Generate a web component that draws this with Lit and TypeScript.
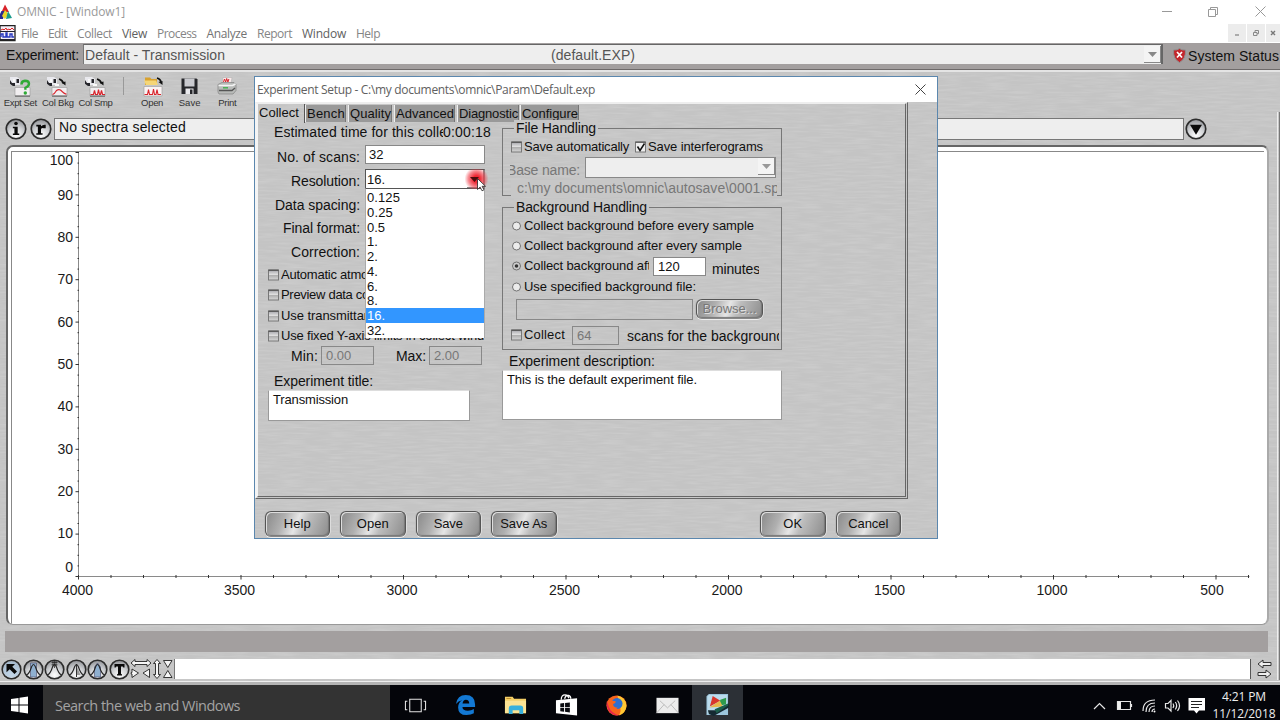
import { LitElement, html, css, svg } from "lit";
import { customElement, property } from "lit/decorators.js";

/** A label whose tracking is adjusted so that it occupies a given width. */
@customElement("fit-label")
class FitLabel extends LitElement {
  @property({ type: Number }) w = 0;
  @property() text = "";
  static styles = css`
    :host { display: inline-block; white-space: pre; flex: none; }
    .t { display: inline-block; }
  `;
  firstUpdated() {
    const t = this.renderRoot.querySelector(".t") as HTMLElement;
    const natural = t.getBoundingClientRect().width;
    const n = this.text.length;
    if (natural && n > 1) {
      t.style.letterSpacing = `${(this.w - natural) / n}px`;
      this.style.width = `${this.w}px`;
    }
  }
  render() {
    return html`<span class="t">${this.text}</span>`;
  }
}

const fit = (text: string, w: number, cls = "") =>
  html`<fit-label class=${cls} .text=${text} .w=${w}></fit-label>`;

const menus: [string, number, string][] = [
  ["File", 17, ""], ["Edit", 19, ""], ["Collect", 35, ""], ["View", 25, "strong"],
  ["Process", 39.5, ""], ["Analyze", 40.5, "mid"], ["Report", 35, ""],
  ["Window", 44, "strong"], ["Help", 24, ""],
];

const stack = svg`
  <path d="M1 1h7l3 2v6H1z" fill="#e9e9ee"/>
  <path d="M1 4l2 3h3v3H4L1 8zM7.500 3H10v4H7.500z" fill="#26262b"/>
  <path d="M4 3h2v3H4zM9 8h4v2H9z" fill="#fafafa"/>
  <path d="M13 3q3.500 1 4.500 4.500" stroke="#111" stroke-width="1.800" fill="none"/><path d="M15.500 6.500l4-1v4z" fill="#111"/>`;
const sheet = (line: unknown) => svg`
  <path d="M6 11.500h15v8.500H6z" fill="#f1eef0" stroke="#999" stroke-width=".6"/>
  <path d="M6 19.500h15v1.200H6z" fill="#666"/>${line}`;

const tools = [
  { w: 33, name: "Expt Set", icon: svg`<path d="M1 1h7l3 2v6H1z" fill="#e9e9ee"/><path d="M1 4l2 3h3v3H4L1 8zM7.500 3H10v4H7.500z" fill="#26262b"/><path d="M4 3h2v3H4z" fill="#fafafa"/>${sheet(svg`<path d="M12.500 8.500q0-3.500 3.500-3.700 4 .1 4 3 0 2.500-3.600 4v2" stroke="#2faa36" stroke-width="2.400" fill="none"/><circle cx="16.300" cy="17" r="1.700" fill="#2faa36"/>`)}` },
  { w: 32, name: "Col Bkg", icon: svg`${stack}${sheet(svg`<path d="M6.500 18.500q2-.5 4-4 2-1.500 4-.5 4 4 6 4.200" stroke="#d8242c" stroke-width="1.200" fill="none"/>`)}` },
  { w: 34, name: "Col Smp", icon: svg`${stack}${sheet(svg`<path d="M6.500 18.500h3l1-4 1 4h2l1-5 1 5h1l1-4 1 4h2.500" stroke="#d8242c" stroke-width="1.200" fill="none"/>`)}` },
  { w: 22, name: "Open", icon: svg`
      <path d="M4 1.500h5l1.500 1.500H16v6H4z" fill="#d9a22e"/><path d="M3 4.500h12l2 4.500H5z" fill="#f5d677"/>
      <path d="M16 2q3.500 1 4 4" stroke="#111" stroke-width="1.700" fill="none"/><path d="M17.500 6l4-1v4z" fill="#111"/>
      <path d="M3 10.500h18v9.500H3z" fill="#faf3f3" stroke="#999" stroke-width=".6"/>
      <path d="M3.500 18.500h3l1-5 1 5h3l1-5.500 1 5.500h1.500l1-5 1 5h3" stroke="#d8242c" stroke-width="1.100" fill="none"/>` },
  { w: 22, name: "Save", icon: svg`
      <path d="M3.500 2.500h15l1 1v14.500h-16z" fill="#26272b"/><path d="M6.500 2.500h10v8h-10z" fill="#c9cacf"/><path d="M7.500 12.500h8v5.500h-8z" fill="#e9e9ec"/>
      <path d="M12 13.500h2.500v4.500H12z" fill="#26272b"/>` },
  { w: 18, name: "Print", icon: svg`
      <path d="M7 1.500h9l-1 6H6z" fill="#f7eaea" stroke="#aaa" stroke-width=".5"/>
      <path d="M7.500 6l1-3 1.200 3 1-3.500 1.200 3.500 1-3" stroke="#d8242c" stroke-width="1" fill="none"/>
      <path d="M2 8.500l4-2h12l2 2v6l-3 3.500H3l-1-2z" fill="#b9bbb9" stroke="#777" stroke-width=".6"/>
      <path d="M2.500 9.500h14l3-1.500" stroke="#f4f4f4" stroke-width="1.500" fill="none"/>
      <path d="M3 14.500h13l3-2.500" stroke="#555" stroke-width="1.300" fill="none"/><path d="M7 11.800h5" stroke="#3eb14b" stroke-width="1.400"/>` },
];

const ball = svg`
  <circle cx="10.500" cy="10.500" r="9.300" fill="url(#ball)" stroke="#2c2c2c" stroke-width="1.600"/>`;
const ballDefs = svg`<defs><radialGradient id="ball" cx=".5" cy=".8" r=".85"><stop offset="0" stop-color="#fff"/><stop offset=".5" stop-color="#cdcfd2"/><stop offset="1" stop-color="#85878b"/></radialGradient></defs>`;
const peak = (fill: unknown) => svg`${fill}<path d="M3.500 16q3-1.500 5-8 2-5 4 0 2 6.500 5 8" fill="none" stroke="#222" stroke-width="1.100"/>`;
const viewTools = [
  svg`<circle cx="10.500" cy="10.500" r="8.300" fill="#a9c4de" opacity=".7"/><path d="M5.500 5h8.500l-2.700 2.700 4.700 4.800-2.500 2.500-4.800-4.700-3.200 3z" fill="#0a0a0a"/>`,
  peak(svg`<path d="M7.500 4h6v14h-6z" fill="#8fb0d0" stroke="#446" stroke-width=".6"/>`),
  svg`${peak(svg``)}<path d="M10.500 1v8M7.500 3.500h6M7.500 5.800h6M9 1.500v6M12 1.500v6" stroke="#222" stroke-width=".7"/>`,
  peak(svg`<path d="M10.500 7l4 9h-4z" fill="#999"/><path d="M10.500 5v13" stroke="#333" stroke-width="1"/>`),
  peak(svg`<path d="M7.500 8l3-4 3 4v10h-6z" fill="#8fb0d0" stroke="#446" stroke-width=".6"/>`),
  svg`<path d="M5.500 5h10v3.400h-1.200l-.5-1H12v7.400l1 .7v1H8v-1l1-.7V7.400H7.200l-.5 1H5.500z" fill="#0a0a0a"/>`,
];

const taskIcons = [
  svg`<path d="M6 6.500h12v13H6zM3.500 8.500h-2v9h2M20.500 8.500h2v9h-2" fill="none" stroke="#e4e4e4" stroke-width="1.100"/>`,
  svg`<path d="M2 11.500Q3.500 2 12.200 2 22 2 22 12v2.500H8.800q.2 4 5.700 4 3.500 0 6.200-1.700v4.400Q18 23 13 23 4.300 23 4.300 15q0-5 4.200-7.500Q4.500 8 2 11.500zM8.900 11h7q0-4-3.500-4-3 0-3.500 4z" fill="#1379d4" fill-rule="evenodd"/>`,
  svg`<path d="M1 4h8l1.500 2H23v15H1z" fill="#f4cf67"/><path d="M2.500 5.200h5v1h-5z" fill="#b98a2d"/><path d="M1 8h22v13H1z" fill="#fbe394"/><path d="M5 22v-6q0-3 3-3h9q3 0 3 3v6h-4v-4H9v4z" fill="#38b0dc"/>`,
  svg`<path d="M1 7.500l22-2v18l-22-2.500z" fill="#fff"/><path d="M6.500 7q0-5 4-5 3 0 4 3.500M10 6q1-4 4-3.500 2.500.5 2.500 3.500" fill="none" stroke="#fff" stroke-width="1.300"/><path d="M5.500 11l4-.5v4h-4zM10.500 10.400l5-.6v4.700h-5zM5.500 15.500h4v4l-4-.5zM10.500 15.500h5v4.700l-5-.6z" fill="#0a0b10"/>`,
  svg`<circle cx="12" cy="13" r="10.500" fill="#f8641c"/><path d="M13 2.500q9 2 9.500 11-1 8-8 10 3-5 1-10z" fill="#ffc733"/><path d="M2 8q-1 5 1.500 10 4 6 11 5.500-8-3-10.500-9z" fill="#e8274b"/><circle cx="12.500" cy="11" r="5.800" fill="#2d6fd0"/><path d="M6 5q0 2 1.500 3 3 0 4 1-1 2-3 2.500 0 4 5 4-3 3-7 .5-3.500-4-.5-11z" fill="#f8641c"/>`,
  svg`<path d="M.5 5h23v16H.5z" fill="#ececec"/><path d="M4 8l8 7.500L20 8M.5 21l8-9M23.500 21l-8-9" fill="none" stroke="#b5b5b5" stroke-width=".9"/>`,
  svg`<path d="M3 1h20v22H.5V3.500z" fill="#9cc5dc"/><path d="M3 2h19v10L8 22H1.500V4z" fill="#bcdced"/><path d="M7 3l8 5-11 6z" fill="#d9372c"/><path d="M15 7l6-2v7l-8 1z" fill="#2d9b4c"/><path d="M3.500 15l11-7 3 6z" fill="#e8b94b"/><path d="M2 18h9l13-7v4L8 24l-5-2z" fill="#152a33"/><path d="M9 17l14-6v2l-12 8z" fill="#1c5f4b"/>`,
];

const yLabels = [[100, 160], [90, 194.500], [80, 237], [70, 279], [60, 321.500], [50, 364], [40, 406], [30, 448.500], [20, 490.500], [10, 533], [0, 567]];
const xLabels = [[4000, 77.500], [3500, 239.500], [3000, 402], [2500, 564.500], [2000, 727], [1500, 889.500], [1000, 1052], [500, 1212]];
const range = (n: number) => Array.from({ length: n }, (_, i) => i);

@customElement("app-root")
class AppRoot extends LitElement {
  static styles = css`
    :host {
      display: block; width: 1280px; height: 720px; overflow: hidden; position: relative;
      font-family: "Liberation Sans", Arial, sans-serif; font-size: 14px; line-height: 16px; color: #111;
      --metal: #c4c4c4 url("data:image/svg+xml,%3Csvg xmlns='http://www.w3.org/2000/svg' width='320' height='160'%3E%3Cfilter id='f' x='0' y='0' width='100%25' height='100%25'%3E%3CfeTurbulence type='fractalNoise' baseFrequency='.04 .5' numOctaves='2' seed='4' stitchTiles='stitch'/%3E%3CfeColorMatrix values='0 0 0 0 1 0 0 0 0 1 0 0 0 0 1 .9 0 0 0 -.35'/%3E%3C/filter%3E%3Crect width='320' height='160' filter='url(%23f)' opacity='.32'/%3E%3C/svg%3E");
    }
    * { box-sizing: border-box; }
    svg { display: block; flex: none; overflow: visible; }
    .ui { font-family: "Open Sans", "Noto Sans", sans-serif; }
    .window { display: flex; flex-direction: column; height: 685px; background: var(--metal); }

    .titlebar { height: 24px; background: #fff; display: flex; align-items: center; color: #9a9a9a; font-size: 12px; }
    .titlebar .logo { margin: 0 5px 0 0; }
    .titlebar .ctl { margin-left: auto; }
    .menubar { height: 19px; background: #fff; display: flex; align-items: center; font-size: 12px; color: #858585; }
    .menubar .doc { margin-right: 5px; }
    .menubar fit-label { margin-right: 10px; }
    .strong { color: #606060; } .mid { color: #737373; }
    .mdi { margin-left: auto; display: flex; gap: 1px; height: 19px; }
    .mdi div { width: 18px; height: 18px; background: #ececec; display: grid; place-items: center; overflow: hidden; }
    .mdi div:last-child { width: 14px; }

    .expbar { height: 27px; background: #a39f9f; border-bottom: 1px solid #6e6a6a; display: flex; padding: 1px 0 0 6px; }
    .expbar .lab { line-height: 23px; width: 77px; }
    .combo { width: 1080px; height: 20px; background: #eee; border-top: 1px solid #666; border-left: 1px solid #777; border-right: 2px solid #666; display: flex; align-items: center; color: #555; line-height: 20px; padding-left: 1px; }
    .combo .exp { margin-left: auto; }
    .combo .drop { margin-left: 509px; }
    .drop { width: 17px; height: 17px; background: #f4f4f4; border-right: 1px solid #888; border-bottom: 1px solid #888; display: grid; place-items: center; }
    .status { display: flex; margin-left: 9.500px; align-items: center; height: 23px; }
    .status fit-label { margin-left: 2.500px; }

    .toolbar { height: 44px; display: flex; border-top: 2px solid #e4e4e4; padding: 4px 0 0 1.500px; font-size: 9.500px; line-height: 13px; color: #333; }
    .tool { width: 37.600px; display: flex; flex-direction: column; align-items: center; height: 36px; }
    .tool svg { margin-bottom: -1px; }
    .sep { width: 1px; height: 18px; background: #777; margin: 1px 9.500px 0 8.500px; border-right: 1px solid #999; }
    .inforow { height: 31px; display: flex; align-items: center; padding: 0 0 1px 5px; }
    .inforow svg + svg { margin-left: 3px; }
    .infobox { margin-left: 2px; width: 1130px; height: 22px; background: #eee; border: 1px solid #777; padding: 0 4px; line-height: 17px; }
    .inforow .infobox + svg { margin-left: 1px; }

    .plot { margin-left: 6px; width: 1263px; height: 480px; background: #fff; border: 2px solid #666; border-right-color: #aaa; border-bottom: 1px solid #999; border-radius: 7px; overflow: hidden; padding: 4px 2px 0 3px; }
    .inner { border-top: 1px solid #888; border-left: 1px solid #888; width: 1253px; height: 473px; }
    .tick { font-family: "Liberation Sans", Arial, sans-serif; font-size: 14px; fill: #1a1a1a; }
    .band { margin: 6px 0 0 5px; width: 1263px; height: 21px; background: #a39f9f; }
    .viewrow { margin-top: 6px; height: 22px; display: flex; align-items: center; padding-left: 1px; }
    .viewrow .b { margin-right: .5px; }
    .cmd { width: 1077px; height: 20px; background: #fff; border-left: 1px solid #777; border-right: 1px solid #555; margin: 0 6px 0 1px; }
    .floor { height: 4px; margin-top: auto; border-top: 1px solid #eee; background: #b4b4b4; }
    .edge { position: absolute; left: 1277px; top: 112px; width: 3px; height: 568px; border-left: 1px solid #eee; border-right: 1px solid #777; }

    .taskbar { height: 35px; background: #04050a; display: flex; align-items: center; position: relative; }
    .start { width: 43px; height: 35px; padding: 11px 0 0 11px; }
    .search { width: 347px; height: 35px; background: #333; color: #a3a3a3; font-size: 14.500px; padding: 0 12px; line-height: 42px; }
    .task { width: 50.400px; height: 35px; display: grid; place-items: center; padding-top: 5px; }
    .active { background: #2c3036; }
    .tray { margin-left: auto; display: flex; align-items: center; color: #eee; height: 35px; }
    .tray > svg { margin-top: 6px; }
    .clock { width: 73px; display: flex; flex-direction: column; align-items: center; font-size: 12px; line-height: 17px; padding: 3px 0 0 1px; height: 38px; align-self: flex-start; }

    .dialog { position: absolute; left: 254px; top: 76px; width: 684px; height: 463px; border: 1px solid #5b87ae; background: var(--metal); }
    .dtitle { height: 25px; background: #fff; display: flex; align-items: center; padding: 0 11px 0 2px; color: #606060; font-size: 12px; justify-content: space-between; }
    .pane { width: 653px; height: 397px; border-left: 3px solid #f4f4f4; border-top: 2px solid #eee; border-right: 3px double #666; border-bottom: 3px double #666; }
    .tabs { display: flex; height: 18px; font-size: 13px; line-height: 18px; }
    .tab { height: 17px; background: #999; margin: 1px 1px 0 0; padding-left: 1px; border-right: 1px solid #777; border-left: 1px solid #eee; }
    .tab.q { margin-right: 2px; }
    .tab.on { background: none; height: 19px; margin: 0; padding-left: 1px; width: 47px; border: 0; border-right: 1px solid #555; line-height: 17px; }
    .cols { display: flex; }
    .left { width: 244px; flex: none; }
    .right { width: 280px; flex: none; }
    .row { display: flex; align-items: center; }
    .est { height: 20px; padding-left: 16px; }
    .gap { height: 3px; }
    .clip { overflow: hidden; display: flex; flex: none; }
    .f { justify-content: flex-end; padding-right: 142px; height: 24px; }
    .f.in { padding-right: 17px; }
    .f.short { height: 23px; }
    .field { border: 1px solid #888; background: #fff; color: #111; flex: none; font-size: 13px; }
    .f .field { width: 120px; height: 19px; align-self: flex-start; margin-left: 5px; line-height: 17px; padding-left: 3px; }
    .f .field.sel { height: 20px; border-color: #555 #888 #888 #555; padding-left: 1px; line-height: 20px; display: flex; justify-content: space-between; }
    .f .field.sel .drop { height: 18px; background: #fff; }
    .dis { background: none; color: #777; }
    .chk { height: 20.400px; padding: 1.500px 0 0 10px; gap: 2px; font-size: 13px; }
    .mm { height: 20px; padding-left: 33px; }
    .mm .field { width: 53px; height: 19px; line-height: 17px; padding-left: 4px; margin-left: 3px; }
    .mm .field + fit-label { margin-left: 22px; }
    .ttl { height: 24px; padding: 6px 0 0 16px; }
    .area { font-size: 13px; background: #fff; border: 1px solid #999; border-top-color: #ddd; padding: 0 4px; line-height: 17px; }
    .a1 { margin-left: 10px; width: 202px; height: 31px; }
    .a2 { width: 280px; height: 50px; }
    .group { border: 1px solid #777; position: relative; font-size: 13px; }
    .legend { position: absolute; left: 11px; top: -9px; padding: 0 2px; background: #c7c7c7; font-size: 14px; }
    .g1 { margin-top: 6px; height: 68px; padding-top: 8px; }
    .g2 { margin-top: 11px; height: 143px; padding-top: 8px; }
    .group .r { padding-left: 8px; gap: 2px; height: 20.200px; }
    .group .r.last { height: 29px; }
    .base { height: 25px; color: #777; font-size: 14px; padding-left: 7px; }
    .base .off { width: 191px; height: 21px; border: 1px solid #888; background: #eee; display: flex; justify-content: flex-end; margin: -4px 0 0 5px; }
    .cut { width: 70px; overflow: hidden; display: flex; justify-content: flex-end; }
    .path { width: 266px; margin-left: 8px; background: #c7c7c7; color: #777; font-size: 14px; height: 17px; overflow: hidden; padding-left: 6px; margin-top: -2px; line-height: 17px; }
    .num { width: 53px; height: 19px; line-height: 17px; padding-left: 4px; }
    .num.after { margin-left: 2px; }
    .c-est { width: 169px; } .c-aft { width: 125px; } .c-opt { width: 84px; }
    .c-min { width: 47px; padding-top: 5px; font-size: 14px; margin-left: 4px; }
    .sp { width: 2px; }
    .n64 { width: 47px; margin-left: 5px; }
    .c-scan { width: 152px; padding-top: 1px; font-size: 14px; margin-left: 6px; }
    .file { height: 24px; padding: 1px 0 0 13px; gap: 3px; }
    .file .field { width: 177px; height: 21px; }
    .desc { padding: 3px 0 0 7px; height: 20px; }
    .btn { border: 1px solid #555; border-bottom-color: #888; border-radius: 6px; box-shadow: 0 1px 0 #eee, 1px 0 0 #ddd, -1px 0 0 #bbb, inset 1px 1px 0 #ddd, inset -1px -1px 1px #777;
      background: linear-gradient(112deg, #8e8e8e 4%, #b0b0b0 28%, #e6e6e6 48%, #bdbdbd 62%, #929292 95%); display: grid; place-items: center; font-size: 13px; }
    .btn.sm { width: 67px; height: 20px; color: #777; text-shadow: 1px 1px #ddd; }
    .buttons { display: flex; padding: 12px 0 0 9.500px; gap: 10px; }
    .buttons .btn { width: 65.500px; height: 26px; }
    .buttons .btn.ok { margin-left: 193.500px; }
    .list { position: absolute; left: 110px; top: 111px; width: 120px; height: 150px; background: #fff; border: 1px solid #aaa; border-top-color: #555; border-bottom: 0; font-size: 13px; display: flex; flex-direction: column; padding-top: 1px; overflow: hidden; }
    .opt { height: 14.750px; line-height: 15px; padding-left: 1px; flex: none; }
    .opt.cur { background: #3296ff; color: #fff; }
    .glow { position: absolute; left: 209px; top: 92px; width: 25px; height: 20px; background: radial-gradient(circle, #ee2632 20%, #f0384499 50%, #f0182500 75%); }
    .arrow { position: absolute; left: 214px; top: 96px; }
  `;

  box(checked = false) {
    return html`<svg width="11" height="12" viewBox="0 0 11 12"><defs><linearGradient id="cb" x1="0" y1="0" x2="0" y2="1"><stop offset="0" stop-color="#a4a4aa" /><stop offset=".45" stop-color="#dedede" /><stop offset=".55" stop-color="#b0b0b0" /><stop offset="1" stop-color="#d8d8d8" /></linearGradient></defs>
      <rect x=".5" y="1" width="10" height="10" fill=${checked ? "#eee" : "url(#cb)"} stroke="#777" />
      <path d="M.5 1.200h10" stroke="#444" stroke-width="1" />
      ${checked ? svg`<path d="M2.500 5.500l2.500 4 4.500-7" fill="none" stroke="#111" stroke-width="1.500"/>` : ""}</svg>`;
  }

  radio(on = false) {
    return html`<svg width="11" height="12" viewBox="0 0 11 12"><circle cx="5.500" cy="6" r="4" fill=${on ? "#ccc" : "#ececec"} stroke="#666" stroke-width=".9" />
      ${on ? svg`<circle cx="5.500" cy="6" r="1.800" fill="#333"/>` : ""}</svg>`;
  }

  chart() {
    return html`<svg width="1253" height="472" viewBox="12 152 1253 472">
      <path d="M78.500 152V576.500H1249.500" fill="none" stroke="#8a8a8a" />
      ${range(41).map((i) => svg`<path d="M${i % 4 ? 77.5 : 75.5} ${152.5 + i * 10.6}H79" stroke="#333"/>`)}
      ${range(37).map((i) => svg`<path d="M${78.5 + i * 32.5} 575V${i % 5 ? 578 : 579.5}" stroke="#333"/>`)}
      ${yLabels.map(([v, y]) => svg`<text class="tick" x="73" y=${y + 5} text-anchor="end">${v}</text>`)}
      ${xLabels.map(([v, x]) => svg`<text class="tick" x=${x} y="594.500" text-anchor="middle">${v}</text>`)}
    </svg>`;
  }

  tool(t: (typeof tools)[number]) {
    return html`<div class="tool"><svg width="23" height="21" viewBox="0 0 23 21">${t.icon}</svg>${fit(t.name, t.w)}</div>`;
  }

  tri(color: string) {
    return html`<svg width="9" height="5" viewBox="0 0 9 5"><path d="M0 0h9L4.500 5z" fill=${color} /></svg>`;
  }

  dialog() {
    return html`<div class="dialog">
      <div class="dtitle ui">${fit("Experiment Setup - C:\\my documents\\omnic\\Param\\Default.exp", 338)}
        <svg width="11" height="11" viewBox="0 0 11 11"><path d="M.5.5l10 10M10.500.5l-10 10" stroke="#444" stroke-width="1" /></svg></div>
      <div class="pane">
        <div class="tabs">
          <div class="tab on">${fit("Collect", 40)}</div>
          <div class="tab q">${fit("Bench", 38)}</div><div class="tab q">${fit("Quality", 41)}</div>
          <div class="tab q">${fit("Advanced", 58)}</div><div class="tab">${fit("Diagnostic", 59)}</div>
          <div class="tab">${fit("Configure", 56)}</div>
        </div>
        <div class="cols">
          <div class="left">
            <div class="row est"><div class="clip c-est">${fit("Estimated time for this colle", 173)}</div>${fit("0:00:18", 48)}</div>
            <div class="gap"></div>
            <div class="row f in">${fit("No. of scans:", 83)}<div class="field">32</div></div>
            <div class="row f in">${fit("Resolution:", 69)}<div class="field sel">16.<div class="drop"></div></div></div>
            <div class="row f short">${fit("Data spacing:", 85)}</div>
            <div class="row f">${fit("Final format:", 77)}</div>
            <div class="row f">${fit("Correction:", 69)}</div>
            <div class="row chk">${this.box()}<div class="clip c-opt">${fit("Automatic atmo", 87)}</div></div>
            <div class="row chk">${this.box()}<div class="clip c-opt">${fit("Preview data co", 88)}</div></div>
            <div class="row chk">${this.box()}<div class="clip c-opt">${fit("Use transmittan", 90)}</div></div>
            <div class="row chk">${this.box()}${fit("Use fixed Y-axis limits in collect wind", 203)}</div>
            <div class="row mm">${fit("Min:", 27)}<div class="field dis">0.00</div>${fit("Max:", 30)}<div class="field dis">2.00</div></div>
            <div class="row ttl">${fit("Experiment title:", 99)}</div>
            <div class="area a1">${fit("Transmission", 75)}</div>
          </div>
          <div class="right">
            <div class="group g1">
              <div class="legend">${fit("File Handling", 80)}</div>
              <div class="row r">${this.box()}${fit("Save automatically", 105)}<span class="sp"></span>${this.box(true)}${fit("Save interferograms", 115)}</div>
              <div class="row base"><div class="cut">${fit("Base name:", 73)}</div><div class="off"><div class="drop">${this.tri("#999")}</div></div></div>
              <div class="path">${fit("c:\\my documents\\omnic\\autosave\\0001.sp", 262)}</div>
            </div>
            <div class="group g2">
              <div class="legend">${fit("Background Handling", 131)}</div>
              <div class="row r">${this.radio()}${fit("Collect background before every sample", 230)}</div>
              <div class="row r">${this.radio()}${fit("Collect background after every sample", 218)}</div>
              <div class="row r">${this.radio(true)}<div class="clip c-aft">${fit("Collect background aft", 127)}</div>
                <div class="field num after">120</div><div class="clip c-min">${fit("minutes", 48)}</div></div>
              <div class="row r">${this.radio()}${fit("Use specified background file:", 172)}</div>
              <div class="row file"><div class="field dis"></div><div class="btn sm">${fit("Browse...", 54)}</div></div>
              <div class="row r last">${this.box()}${fit("Collect", 41)}
                <div class="field dis num n64">64</div><div class="clip c-scan">${fit("scans for the background", 157)}</div></div>
            </div>
            <div class="desc">${fit("Experiment description:", 146)}</div>
            <div class="area a2">${fit("This is the default experiment file.", 190)}</div>
          </div>
        </div>
      </div>
      <div class="buttons">
        <div class="btn">${fit("Help", 27)}</div><div class="btn">${fit("Open", 32)}</div><div class="btn">${fit("Save", 29)}</div><div class="btn">${fit("Save As", 47)}</div>
        <div class="btn ok">${fit("OK", 19)}</div><div class="btn">${fit("Cancel", 40)}</div>
      </div>
      <div class="list">${["0.125", "0.25", "0.5", "1.", "2.", "4.", "6.", "8.", "16.", "32."].map(
        (o) => html`<div class="opt ${o === "16." ? "cur" : ""}">${fit(o, o.length === 5 ? 33 : o.length === 4 ? 26 : o.length === 2 ? 11 : 18)}</div>`,
      )}</div>
      <div class="glow"></div>
      <svg class="arrow" width="18" height="18" viewBox="0 0 18 18"><path d="M1 4h9L5.500 9z" fill="#4c0b0b" /><path d="M8.500 5.500v11l2.600-2.400 1.900 3.700 2-1-1.900-3.500h3.400z" fill="#fff" stroke="#222" stroke-width=".8" /></svg>
    </div>`;
  }

  render() {
    return html`
      <div class="window">
        <div class="titlebar ui">
          <svg class="logo" width="12" height="16" viewBox="0 0 12 16">${ballDefs}<path d="M5 .5L9 8H1.500z" fill="#d8232a" /><path d="M1.500 7H5l-2 8H0v-5z" fill="#2a2a90" /><path d="M5 6l3.500 4L5 15 2 12z" fill="#e8d52a" /><path d="M8 7l4 7-6 1z" fill="#199a8b" /></svg>
          ${fit("OMNIC - [Window1]", 108)}
          <svg class="ctl" width="118" height="14" viewBox="1162 5 118 14"><path d="M1162 11.500h10M1208.500 9.500h7v7h-7zM1210.500 9.500v-2h7v7h-2M1255.500 6.500l10 10M1265.500 6.500l-10 10" fill="none" stroke="#999" /></svg>
        </div>
        <div class="menubar ui">
          <svg class="doc" width="16" height="17" viewBox="0 0 16 17"><path d="M0 .7h15v15H0z" fill="#f6f0f8" stroke="#222" stroke-width="1.300" /><path d="M1 5l2-1 1 1 2-2 1 2 2-1 1 1 2-2 2 2" stroke="#d22" fill="none" /><path d="M0 6.500h15M0 14.500h15" stroke="#223" /><path d="M1 12V9h2v3h3V8h1v4h3V9h2v3h2" stroke="#2838c0" stroke-width="1.400" fill="none" /></svg>
          ${menus.map(([m, w, c]) => fit(m, w, c))}
          <div class="mdi">
            <div><svg width="6" height="6" viewBox="0 0 6 6"><path d="M1 5h4" stroke="#888" stroke-width="1.300" /></svg></div>
            <div><svg width="6" height="6" viewBox="0 0 6 6"><path d="M.5 2.500h3.500v3H.5zM2 2V.5h3.500v3.200H4" stroke="#888" fill="none" /></svg></div>
            <div><svg width="6" height="6" viewBox="0 0 6 6"><path d="M1 1l4 4M5 1L1 5" stroke="#777" stroke-width="1.400" /></svg></div>
          </div>
        </div>
        <div class="expbar">
          <div class="lab">${fit("Experiment:", 73)}</div>
          <div class="combo">${fit("Default - Transmission", 140)}${fit("(default.EXP)", 84, "exp")}<div class="drop">${this.tri("#888")}</div></div>
          <div class="status"><svg width="13" height="15" viewBox="0 0 13 15"><path d="M6.500.5Q9 2.500 12.500 2q.5 9-6 12.500Q0 11 .5 2 4 2.500 6.500.5z" fill="#c3262b" stroke="#8f8f8f" /><path d="M4 4l5 5.500M9 4L4 9.500" stroke="#fff" stroke-width="1.700" /></svg>${fit("System Status", 91)}</div>
        </div>
        <div class="toolbar">
          ${tools.slice(0, 3).map((t) => this.tool(t))}<div class="sep"></div>${tools.slice(3).map((t) => this.tool(t))}
        </div>
        <div class="inforow">
          <svg width="22" height="22" viewBox="0 0 21 21">${ball}<circle cx="10.500" cy="5.300" r="1.700" fill="#0a0a0a" /><path d="M7.500 8.300h4.600v6.500h1.500v1.500H7.500v-1.500H9V9.800H7.500z" fill="#0a0a0a" /></svg>
          <svg width="22" height="22" viewBox="0 0 21 21">${ball}<path d="M6 6.500h4.500v1.400q1.800-1.900 4.500-1.400v3.200h-1.800q-1.700-.8-2.700.8v4h1.500v1.600H6v-1.600h1.500V8H6z" fill="#0a0a0a" /></svg>
          <div class="infobox">${fit("No spectra selected", 127)}</div>
          <svg width="22" height="22" viewBox="0 0 21 21">${ball}<path d="M4.800 6.500h11.400L10.500 16z" fill="#0a0a0a" /></svg>
        </div>
        <div class="plot"><div class="inner">${this.chart()}</div></div>
        <div class="band"></div>
        <div class="viewrow">
          ${viewTools.map((v) => html`<svg class="b" width="21" height="21" viewBox="0 0 21 21">${ball}${v}</svg>`)}
          <svg width="43" height="20" viewBox="131 659 43 20" fill="#f6f6f6" stroke="#222" stroke-width=".9">
            <path d="M132 663l4-3.500v2h12v-2l4 3.500-4 3.500v-2h-12v2zM133 669l6.500 4-6.500 4.500v-3.500h-.8v-1.500h.8zM150.500 669l-6.500 4 6.500 4.500zM158 659.500l3.500 4h-2v11h2l-3.500 4-3.500-4h2v-11h-2zM164.500 660.500h8.500l-4.200 7zM164.500 677.500h8.500l-4.200-7z" /></svg>
          <div class="cmd"></div>
          <svg width="15" height="20" viewBox="0 0 15 20" fill="#eee" stroke="#333"><path d="M1 5l5-4v2.500h8v3H6V9zM14 15l-5-4v2.500H1v3h8V19z" /></svg>
        </div>
        <div class="floor"></div>
      </div>
      <div class="edge"></div>
      <div class="taskbar ui">
        <div class="start"><svg width="18" height="18" viewBox="0 0 18 18"><path d="M0 3l7.500-1v6.500H0zM8.500 1.800L17 .5v8H8.500zM0 9.500h7.500V16L0 15zM8.500 9.500H17v8l-8.500-1.300z" fill="#fff" /></svg></div>
        <div class="search">${fit("Search the web and Windows", 185)}</div>
        ${taskIcons.map((t, i) => html`<div class="task ${i === 6 ? "active" : ""}"><svg width="23" height="24" viewBox="0 0 24 25">${t}</svg></div>`)}
        <div class="tray">
          <svg width="114" height="22" viewBox="1093 695 114 22" fill="none" stroke="#e6e6e6" stroke-width="1.200">
            <path d="M1094 709l5.500-5.500 5.500 5.500" />
            <path d="M1117.500 701.500h13v8h-13zM1131.500 704v3" /><path d="M1118 702h3v7h-3z" fill="#eee" stroke="none" />
            <path d="M1143 711q0-11 12-11M1146 712q0-9 9-9M1149 712q0-6 6-6M1152 712q0-3 3-3" /><circle cx="1154.500" cy="711.500" r="1" fill="#fff" stroke="none" />
            <path d="M1165.500 703.500h2.500l3-3v10.500l-3-3h-2.500zM1173 703.500q1.500 2 0 4.500M1175.300 702q2.700 3.500 0 7.500M1177.500 700.500q4 5 0 10.500" />
            <path d="M1188.500 698h16.500v12.500h-6l-2.500 3-2.500-3h-5.500z" fill="#fff" stroke="none" /><path d="M1191 701.500h11M1191 704.500h11M1191 707.500h8" stroke="#222" stroke-width="1" />
          </svg>
          <div class="clock">${fit("4:21 PM", 44)}${fit("11/12/2018", 63)}</div>
        </div>
      </div>
      ${this.dialog()}
    `;
  }
}
